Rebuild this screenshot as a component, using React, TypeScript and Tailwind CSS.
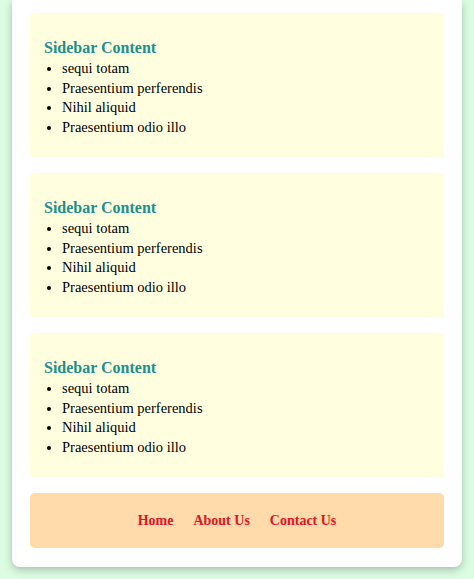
const items = ["sequi totam", "Praesentium perferendis", "Nihil aliquid", "Praesentium odio illo"];

const SidebarBox = () => (
  <div className="bg-[#ffffe0] rounded-[4px] pl-[14px] pr-4 pt-[25px] pb-[21px]">
    <h3 className="text-[16px] font-bold text-[#20908a] leading-[20px] mb-[1px]">
      Sidebar Content
    </h3>
    <ul className="list-disc pl-[18px] text-[14.5px] leading-[19.5px] text-black">
      {items.map((item) => (
        <li key={item}>{item}</li>
      ))}
    </ul>
  </div>
);

export default function App() {
  return (
    <div
      className="min-h-[579px] bg-[#ddfde3] pb-[13px]"
      style={{ fontFamily: '"Liberation Serif", serif' }}
    >
      <div className="mx-[12px] bg-white rounded-b-[8px] shadow-[0_3px_8px_rgba(0,0,0,0.25)] px-[18px] pt-[13px] pb-[19px] flex flex-col gap-[15px]">
        <SidebarBox />
        <SidebarBox />
        <SidebarBox />
        <footer className="bg-[#ffdaab] rounded-[5px] h-[55px] flex items-center justify-center gap-[20px]">
          <a className="text-[14px] font-bold text-[#e3131f]">Home</a>
          <a className="text-[14px] font-bold text-[#e3131f]">About Us</a>
          <a className="text-[14px] font-bold text-[#e3131f]">Contact Us</a>
        </footer>
      </div>
    </div>
  );
}
